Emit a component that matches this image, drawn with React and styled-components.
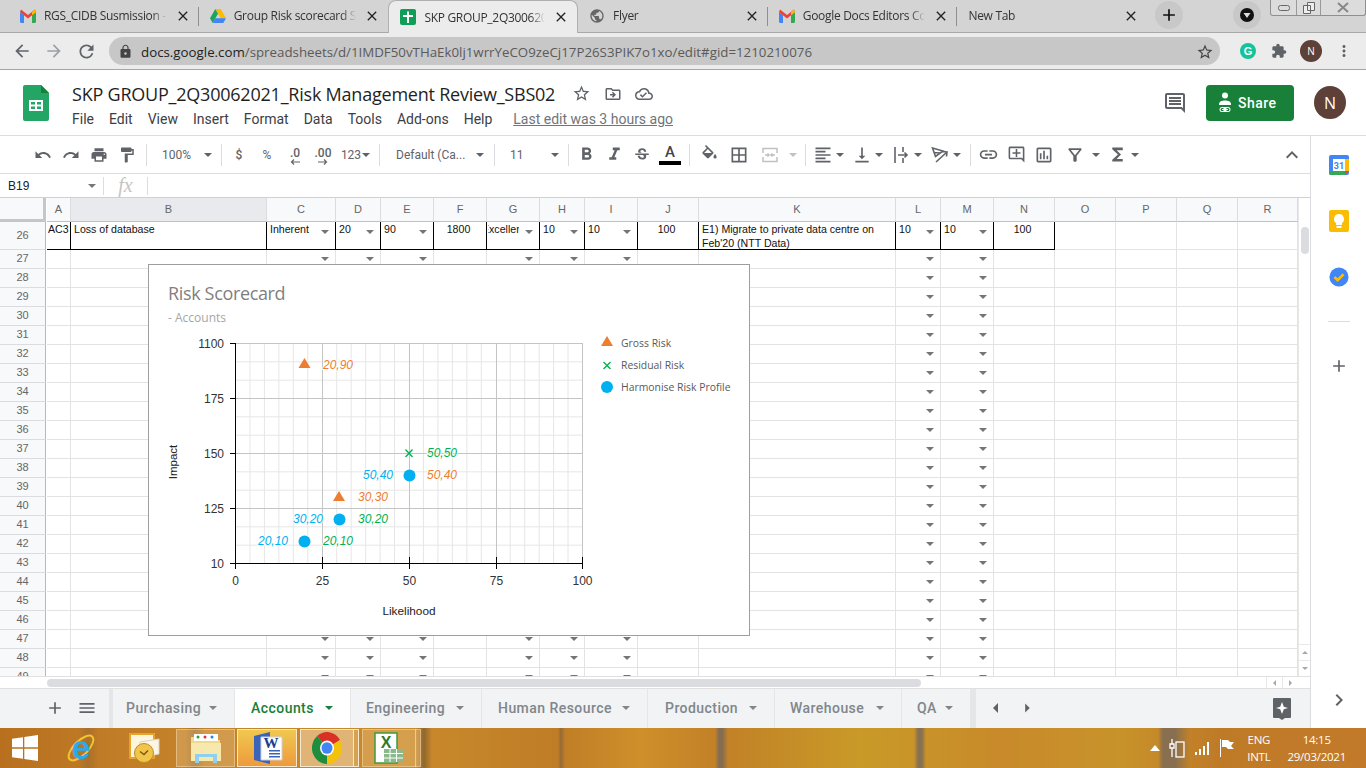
import React from "react";
import styled, { createGlobalStyle } from "styled-components";
import {
  MdArrowBack, MdArrowForward, MdRefresh, MdLock, MdStarBorder, MdExtension, MdMoreVert, MdAdd, MdClose,
  MdPublic, MdUndo, MdRedo, MdPrint, MdFormatPaint, MdFormatBold, MdFormatItalic, MdStrikethroughS,
  MdBorderAll, MdFormatAlignLeft, MdVerticalAlignBottom, MdLink, MdOutlineAddComment,
  MdOutlineInsertChart, MdOutlineFilterAlt, MdFunctions, MdExpandLess, MdChevronRight, MdMenu, MdOutlineDriveFileMove,
  MdOutlineCloudDone, MdOutlineInsertComment, MdArrowLeft, MdArrowRight,
} from "react-icons/md";

const GlobalStyle = createGlobalStyle`
  html, body { margin: 0; padding: 0; width: 1366px; height: 768px; overflow: hidden; background: #fff; }
  * { box-sizing: border-box; }
  body { font-family: "Roboto", "Liberation Sans", sans-serif; }
`;

const Page = styled.div`
  width: 1366px;
  height: 768px;
  display: flex;
  flex-direction: column;
  overflow: hidden;
`;

/* browser tabs */
const TabStrip = styled.div`
  height: 33px;
  flex: none;
  display: flex;
  align-items: flex-end;
  padding-left: 9px;
  background: #d4d4d4;
  border-bottom: 1px solid #a8a8a8;
`;
const BrowserTab = styled.div`
  width: 189.7px;
  height: 33px;
  margin-bottom: ${p => (p.$active ? "-1px" : "0")};
  display: flex;
  align-items: center;
  gap: 8px;
  padding: 0 8px 0 11px;
  border-radius: 8px 8px 0 0;
  background: ${p => (p.$active ? "#ececec" : "transparent")};
  border: ${p => (p.$active ? "1px solid #b0b0b0" : "none")};
  border-bottom: none;
  position: relative;
  &::after {
    content: "";
    display: ${p => (p.$sep ? "block" : "none")};
    position: absolute;
    right: 0;
    top: 8px;
    height: 19px;
    width: 1px;
    background: #8f8f8f;
  }
`;
const TabTitle = styled.span`
  flex: 1;
  min-width: 0;
  white-space: nowrap;
  overflow: hidden;
  font: 12px "Open Sans", "Noto Sans", sans-serif;
  letter-spacing: -0.3px;
  color: #333;
  -webkit-mask-image: linear-gradient(90deg, #000 88%, transparent 100%);
  mask-image: linear-gradient(90deg, #000 88%, transparent 100%);
`;
const Favicon = styled.span`
  width: 16px;
  height: 16px;
  flex: none;
  display: flex;
  align-items: center;
  justify-content: center;
  color: #666;
`;
const NewTabButton = styled.div`
  width: 28px;
  height: 28px;
  margin: 0 0 3px 8px;
  border-radius: 50%;
  background: #c8c8c8;
  display: flex;
  align-items: center;
  justify-content: center;
  color: #111;
`;
const ProfileDot = styled.div`
  width: 28px;
  height: 28px;
  margin: 0 0 3px 50px;
  border-radius: 50%;
  background: #c8c8c8;
  display: flex;
  align-items: center;
  justify-content: center;
`;
const WindowControls = styled.div`
  align-self: flex-start;
  display: flex;
  height: 16px;
  margin-left: auto;
  width: 96px;
  border: 1px solid #8f8f8f;
  border-top: none;
  border-radius: 0 0 3px 3px;
  background: #dcdcdc;
`;
const WinBtn = styled.div`
  width: ${p => p.$w}px;
  border-right: ${p => (p.$last ? "none" : "1px solid #9a9a9a")};
  display: flex;
  align-items: center;
  justify-content: center;
`;

/* address bar */
const AddressBar = styled.div`
  height: 37px;
  flex: none;
  display: flex;
  align-items: center;
  background: #ececec;
  border-bottom: 1px solid #a6a6a6;
  color: #5f6368;
  padding-left: 6px;
`;
const NavIcon = styled.span`
  width: ${p => p.$w || 32}px;
  margin-left: ${p => p.$ml || 0}px;
  display: flex;
  align-items: center;
  justify-content: center;
  color: ${p => p.$color || "#5f6368"};
  flex: none;
`;
const UrlPill = styled.div`
  width: 1111px;
  height: 28px;
  margin-left: 7px;
  border-radius: 14px;
  background: #c7c7c7;
  display: flex;
  align-items: center;
  padding: 1px 3px 0 9px;
  font: 13.3px "Open Sans", "Noto Sans", sans-serif;
  color: #5a5a5a;
  b { font-weight: 400; color: #222; }
`;
const GrammarlyBadge = styled.span`
  width: 16px;
  height: 16px;
  border-radius: 50%;
  background: #15c39a;
  color: #fff;
  font: 700 11px "Liberation Sans", sans-serif;
  display: flex;
  align-items: center;
  justify-content: center;
`;
const SmallAvatar = styled.span`
  width: 22px;
  height: 22px;
  border-radius: 50%;
  background: #5d4037;
  color: #fff;
  font: 10px "Open Sans", sans-serif;
  display: flex;
  align-items: center;
  justify-content: center;
`;

/* docs header */
const DocHeader = styled.div`
  height: 66px;
  flex: none;
  display: flex;
  align-items: center;
  padding: 0 20px 0 23px;
  background: #fff;
  border-bottom: 1px solid #dadce0;
`;
const DocTitleBlock = styled.div`
  margin-left: 23px;
  flex: 1;
  display: flex;
  flex-direction: column;
  gap: 4px;
  padding-top: 2px;
`;
const TitleRow = styled.div`
  display: flex;
  align-items: center;
  height: 26px;
  color: #5f6368;
`;
const DocTitle = styled.div`
  font: 18px "Open Sans", "Roboto", sans-serif;
  letter-spacing: -0.22px;
  color: #1f1f1f;
  margin-right: 11px;
`;
const HeadIcon = styled.span`
  width: 31px;
  display: flex;
  align-items: center;
  justify-content: center;
`;
const MenuRow = styled.div`
  display: flex;
  align-items: center;
  gap: 15px;
  font: 14px "Roboto", sans-serif;
  color: #3c4043;
`;
const LastEdit = styled.span`
  margin-left: 6px;
  color: #70757a;
  text-decoration: underline;
`;
const ShareButton = styled.div`
  width: 88px;
  height: 36px;
  margin-left: 19px;
  padding-left: 12px;
  background: #188038;
  border-radius: 4px;
  display: flex;
  align-items: center;
  gap: 6px;
  color: #fff;
  font: 500 14px "Roboto", sans-serif;
  letter-spacing: 0.5px;
`;
const Avatar = styled.div`
  width: 32px;
  height: 33px;
  margin-left: 20px;
  border-radius: 50%;
  background: #5d4037;
  color: #fff;
  font: 16px "Open Sans", sans-serif;
  display: flex;
  align-items: center;
  justify-content: center;
`;

/* body split */
const Workspace = styled.div`
  flex: 1;
  min-height: 0;
  display: flex;
`;
const SheetColumn = styled.div`
  width: 1311px;
  flex: none;
  display: flex;
  flex-direction: column;
  border-right: 1px solid #dadce0;
`;
const SidePanel = styled.div`
  flex: 1;
  display: flex;
  flex-direction: column;
  align-items: center;
  padding-top: 17px;
`;
const SideIcon = styled.div`
  height: 24px;
  margin-bottom: 32px;
  display: flex;
  align-items: center;
`;
const SideRule = styled.div`
  width: 22px;
  height: 1px;
  background: #dadce0;
  margin: 0 0 32px;
`;
const SideChevron = styled.div`
  margin-top: auto;
  height: 40px;
  margin-bottom: 8px;
  color: #5f6368;
  display: flex;
  align-items: center;
`;

/* toolbar */
const Toolbar = styled.div`
  height: 38px;
  flex: none;
  display: flex;
  align-items: center;
  padding-left: 29px;
  border-bottom: 1px solid #dadce0;
  color: #5f6368;
`;
const ToolBtn = styled.div`
  width: ${p => p.$w || 28}px;
  height: 28px;
  flex: none;
  margin-left: ${p => p.$ml || 0}px;
  display: flex;
  align-items: center;
  justify-content: center;
  font: ${p => p.$font || '12px "Roboto", sans-serif'};
  color: ${p => p.$color || "#5f6368"};
  opacity: ${p => (p.$disabled ? 0.4 : 1)};
`;
const ToolSelect = styled.div`
  width: ${p => p.$w}px;
  height: 28px;
  flex: none;
  display: flex;
  align-items: center;
  justify-content: space-between;
  padding: 0 ${p => p.$pr}px 0 ${p => p.$pl}px;
  font: 12px "Roboto", sans-serif;
  color: #5f6368;
`;
const ToolSep = styled.div`
  width: 1px;
  height: 22px;
  flex: none;
  margin: ${p => p.$m || "0 5px"};
  background: #dadce0;
`;
const Caret = styled.span`
  display: inline-block;
  flex: none;
  width: 0;
  height: 0;
  border-left: 4px solid transparent;
  border-right: 4px solid transparent;
  border-top: 4px solid ${p => p.$color || "#5f6368"};
  margin-left: ${p => p.$ml || 0}px;
`;
const DecimalStack = styled.span`
  display: flex;
  flex-direction: column;
  align-items: center;
  font: 500 12px/12px "Roboto", sans-serif;
  margin-top: 3px;
`;
const TextColorA = styled.span`
  display: flex;
  flex-direction: column;
  align-items: center;
  font: 500 15px "Roboto", sans-serif;
  line-height: 15px;
  color: #444;
  width: 22px;
  &::after {
    content: "";
    width: 22px;
    height: 4px;
    background: #000;
    margin-top: 1px;
  }
`;
const CollapseBtn = styled.div`
  margin-left: auto;
  margin-right: 6px;
  color: #5f6368;
  display: flex;
`;

/* formula bar */
const FormulaBar = styled.div`
  height: 24px;
  flex: none;
  display: flex;
  align-items: center;
  border-bottom: 1px solid #d0d0d0;
`;
const NameBox = styled.div`
  width: 103px;
  display: flex;
  align-items: center;
  justify-content: space-between;
  padding: 0 7px 0 8px;
  font: 12px "Liberation Sans", sans-serif;
  color: #222;
`;
const FxLabel = styled.div`
  width: 43px;
  text-align: center;
  font: italic 20px "Liberation Serif", serif;
  color: #c4c4c4;
`;
const BarSep = styled.div`
  width: 1px;
  height: 18px;
  background: #dadce0;
`;

/* sheet */
const SheetArea = styled.div`
  height: 478px;
  flex: none;
  display: flex;
  position: relative;
  overflow: hidden;
`;
const GridWrap = styled.div`
  width: 1298px;
  flex: none;
  overflow: hidden;
`;
const columns = "47px 24px 196px 69px 45px 53px 53px 53px 45px 53px 61px 197px 45px 53px 61px 61px 61px 61px 60px";
const GridRow = styled.div`
  display: grid;
  grid-template-columns: ${columns};
  height: ${p => p.$h}px;
`;
const CornerCell = styled.div`
  background: #f8f9fa;
  margin-right: 1px;
  border-right: 3px solid #c4c7c5;
  border-bottom: 3px solid #c4c7c5;
`;
const ColHead = styled.div`
  background: ${p => (p.$selected ? "#e8eaed" : "#f8f9fa")};
  border-right: 1px solid #dadce0;
  border-bottom: 1px solid #c0c0c0;
  padding-bottom: 1px;
  display: flex;
  align-items: center;
  justify-content: center;
  font: 11px "Liberation Sans", sans-serif;
  color: #666;
`;
const RowHead = styled.div`
  background: #f8f9fa;
  margin-right: 1px;
  border-right: 1px solid #b8b8b8;
  border-bottom: 1px solid #dadce0;
  padding-bottom: 2px;
  display: flex;
  align-items: center;
  justify-content: center;
  font: 11px "Liberation Sans", sans-serif;
  color: #666;
`;
const Cell = styled.div`
  border-right: 1px solid #e2e3e3;
  border-bottom: 1px solid #e2e3e3;
  display: flex;
  align-items: center;
  justify-content: flex-end;
  padding: 0 6px 1px 0;
`;
const DataCell = styled.div`
  border-right: 1px solid #000;
  border-bottom: 1px solid #000;
  display: flex;
  align-items: flex-start;
  justify-content: ${p => (p.$center ? "center" : "space-between")};
  padding: 0 ${p => (p.$tight ? 0 : 6)}px 0 ${p => (p.$tight ? 1 : 3)}px;
  font: 10.6px/14px "Liberation Sans", sans-serif;
  color: #111;
  overflow: hidden;
  white-space: ${p => (p.$wrap ? "normal" : "nowrap")};
`;
const DataCaret = styled(Caret)`
  margin-top: 8px;
`;
const ClippedCaret = styled(DataCaret)`
  margin-right: 6px;
`;
const ClipText = styled.span`
  flex: 1;
  min-width: 0;
  margin-right: 6px;
  overflow: hidden;
  display: flex;
  justify-content: center;
`;
const VScroll = styled.div`
  flex: 1;
  display: flex;
  flex-direction: column;
  align-items: center;
  padding-top: 29px;
  background: #fff;
  border-left: 1px solid #e8e8e8;
`;
const VThumb = styled.div`
  width: 8px;
  height: 27px;
  border-radius: 4px;
  background: #dadce0;
`;
const ScrollArrow = styled.div`
  width: 100%;
  height: 16px;
  margin-top: ${p => (p.$push ? "auto" : 0)};
  border-top: 1px solid #e8e8e8;
  display: flex;
  align-items: center;
  justify-content: center;
`;
const TinyUp = styled.span`
  width: 0;
  height: 0;
  border-left: 3px solid transparent;
  border-right: 3px solid transparent;
  border-bottom: 3px solid #a8a8a8;
`;
const TinyDown = styled(TinyUp)`
  border-bottom: none;
  border-top: 3px solid #a8a8a8;
`;

/* chart */
const ChartCard = styled.div`
  position: absolute;
  left: 148px;
  top: 66px;
  width: 602px;
  height: 372px;
  background: #fff;
  border: 1px solid #9e9e9e;
  padding: 16px 0 0 0;
`;
const ChartTitle = styled.div`
  margin-left: 19px;
  font: 18px/24px "Open Sans", "Noto Sans", sans-serif;
  letter-spacing: -0.35px;
  color: #7f7f7f;
`;
const ChartSub = styled.div`
  margin: 5px 0 0 19px;
  font: 12px/16px "Open Sans", "Noto Sans", sans-serif;
  color: #a6a6a6;
`;
const ChartSvg = styled.svg`
  display: block;
  position: absolute;
  left: 0;
  top: 0;
`;

/* horizontal scroll */
const HScrollRow = styled.div`
  height: 12px;
  flex: none;
  display: flex;
  align-items: center;
  border-top: 1px solid #e0e0e0;
  padding-left: 47px;
  background: #fff;
`;
const HThumb = styled.div`
  width: 874px;
  height: 8px;
  border-radius: 4px;
  background: #dadce0;
`;
const HArrows = styled.div`
  margin-left: auto;
  margin-right: 12px;
  height: 100%;
  display: flex;
`;
const HArrow = styled.div`
  width: 16px;
  display: flex;
  align-items: center;
  justify-content: center;
  border-left: 1px solid #e8e8e8;
  span { width: 0; height: 0; border-top: 3px solid transparent; border-bottom: 3px solid transparent; }
`;
const ArrowL = styled.span`border-right: 3px solid #a8a8a8;`;
const ArrowR = styled.span`border-left: 3px solid #a8a8a8;`;

/* sheet tabs */
const SheetTabs = styled.div`
  height: 40px;
  flex: none;
  display: flex;
  align-items: stretch;
  background: #f1f3f4;
  border-top: 1px solid #e0e0e0;
  padding-left: 41px;
`;
const TabsIcon = styled.div`
  width: ${p => p.$w || 31}px;
  padding-bottom: 2px;
  display: flex;
  align-items: center;
  justify-content: center;
  color: #5f6368;
  flex: none;
`;
const ThickSep = styled.div`
  width: ${p => p.$w || 4}px;
  flex: none;
  background: #e4e6e8;
  margin-left: ${p => p.$ml || 0}px;
`;
const SheetTab = styled.div`
  width: ${p => p.$w}px;
  flex: none;
  display: flex;
  align-items: center;
  justify-content: space-between;
  padding: 0 17px 2px ${p => p.$pl || 15}px;
  background: ${p => (p.$active ? "#fff" : "transparent")};
  border-right: 1px solid #e4e6e8;
  font: 500 14px "Roboto", sans-serif;
  letter-spacing: 0.45px;
  color: ${p => (p.$active ? "#188038" : "#80868b")};
`;
const ExploreBtn = styled.div`
  margin-left: auto;
  margin-right: 18px;
  display: flex;
  align-items: center;
`;

/* taskbar */
const Taskbar = styled.div`
  height: 40px;
  flex: none;
  display: flex;
  align-items: center;
  padding-left: 12px;
  color: #fff;
  background:
    linear-gradient(90deg,
      transparent 0 78px, rgba(120,90,60,.3) 88px, transparent 98px,
      transparent 185px, rgba(110,85,60,.35) 195px, transparent 205px,
      transparent 416px, rgba(90,70,50,.5) 424px, transparent 432px,
      transparent 558px, rgba(110,90,70,.55) 561px, transparent 565px,
      transparent 715px, rgba(120,105,90,.85) 719px, rgba(120,105,90,.85) 722px, transparent 728px,
      transparent 914px, rgba(120,105,90,.8) 918px, rgba(120,105,90,.8) 922px, transparent 926px,
      transparent 1158px, rgba(120,105,90,.8) 1163px, rgba(120,105,90,.8) 1175px, transparent 1190px),
    linear-gradient(90deg, #b8701f 0, #c27f28 140px, #c98a2b 400px, #bf7d26 560px, #cf8f2a 640px, #c18027 720px, #c99a28 860px, #c88a2a 1000px, #c8932a 1120px, #bf7a28 1220px, #c27a2a 1366px);
`;
const StartIcon = styled.div`
  width: 26px;
  height: 26px;
  margin-right: 13px;
`;
const PinIcon = styled.div`
  width: ${p => p.$w}px;
  flex: none;
  display: flex;
  justify-content: center;
`;
const TaskBtn = styled.div`
  width: ${p => p.$w || 59}px;
  height: 38px;
  flex: none;
  margin-left: ${p => p.$ml || 0}px;
  position: relative;
  display: flex;
  align-items: center;
  justify-content: center;
  border: 1px solid ${p => (p.$open ? "#f4e9d0" : "rgba(255,240,210,.4)")};
  background: ${p => p.$bg || "rgba(255,235,200,.22)"};
  &::after {
    content: "";
    display: ${p => (p.$stack ? "block" : "none")};
    position: absolute;
    top: -1px;
    bottom: -1px;
    right: -6px;
    width: 5px;
    border: 1px solid ${p => (p.$open ? "#f4e9d0" : "rgba(255,240,210,.4)")};
    border-left: none;
    background: rgba(255,235,200,.25);
  }
`;
const Tray = styled.div`
  margin-left: auto;
  display: flex;
  align-items: center;
  gap: 9px;
  padding-right: 20px;
`;
const TrayText = styled.div`
  display: flex;
  flex-direction: column;
  align-items: center;
  font: 11.5px/17px "Open Sans", "Noto Sans", sans-serif;
  letter-spacing: -0.25px;
  margin-left: ${p => p.$ml || 0}px;
`;

const SheetsMark = () => (
  <svg width="26" height="36" viewBox="0 0 26 36">
    <path d="M2 0h16l8 8v26a2 2 0 0 1-2 2H2a2 2 0 0 1-2-2V2a2 2 0 0 1 2-2z" fill="#23a566" />
    <path d="M18 0l8 8h-8z" fill="#188038" />
    <path d="M6 15h14v11H6zm2 2v2.500h4V17zm6 0v2.500h4V17zm-6 4.500V24h4v-2.500zm6 0V24h4v-2.500z" fill="#fff" fillRule="evenodd" />
  </svg>
);
const GmailIcon = () => (
  <svg width="16" height="14" viewBox="0 0 16 14">
    <path d="M0 3v9.500A1.500 1.500 0 0 0 1.500 14H4V6z" fill="#4285f4" />
    <path d="M12 6v8h2.500a1.500 1.500 0 0 0 1.500-1.500V3z" fill="#34a853" />
    <path d="M0 3l1-2.500L8 6l7-5.500L16 3l-8 6.500L0 3z" fill="#ea4335" />
    <path d="M12 3.200L15 .5 16 3l-4 3.200z" fill="#fbbc04" />
  </svg>
);
const DriveIcon = () => (
  <svg width="16" height="14" viewBox="0 0 16 14">
    <path d="M5.300 0h5.400l5.300 9.300h-5.400z" fill="#fbbc04" />
    <path d="M5.300 0L0 9.300 2.700 14l5.300-9.300z" fill="#1ea362" />
    <path d="M2.700 14h10.600L16 9.300H5.400z" fill="#4285f4" />
  </svg>
);
const SheetsFavicon = () => (
  <svg width="16" height="16" viewBox="0 0 16 16">
    <rect width="16" height="16" rx="2" fill="#0f9d58" />
    <path d="M7 2.500h2V6h4v2H9v6H7V8H3V6h4z" fill="#fff" />
  </svg>
);
const ShareIcon = () => (
  <svg width="14" height="22" viewBox="0 0 14 22" fill="#fff">
    <circle cx="7" cy="3.500" r="3" />
    <path d="M1 12c0-2.500 3-3.500 6-3.500s6 1 6 3.500v1H1z" />
    <path d="M4 15h6a2 2 0 0 1 0 5H4a2 2 0 0 1 0-5zm0 1a1.500 1.500 0 0 0 0 3h1.500v-3zm4.500 0v3H10a1.500 1.500 0 0 0 0-3z" fillRule="evenodd" />
    <rect x="4" y="17" width="6" height="1" />
  </svg>
);
const FillIcon = () => (
  <svg width="19" height="19" viewBox="0 0 24 24" fill="currentColor">
    <path d="M16.560 8.940 7.620 0 6.210 1.410l2.380 2.380-5.150 5.150a1.500 1.500 0 0 0 0 2.120l5.500 5.500a1.500 1.500 0 0 0 2.120 0l5.500-5.500a1.500 1.500 0 0 0 0-2.120zM5.210 10 10 5.210 14.790 10z" />
    <path d="M19 11.500s-2 2.170-2 3.500a2 2 0 0 0 4 0c0-1.330-2-3.500-2-3.500z" />
  </svg>
);
const MergeIcon = () => (
  <svg width="18" height="18" viewBox="0 0 18 18" fill="none" stroke="currentColor" strokeWidth="1.500">
    <path d="M2 7V2.500h14V7M2 11v4.500h14V11M4 9h4M6.500 7.500 8 9l-1.500 1.500M14 9h-4M11.500 7.500 10 9l1.500 1.500" />
  </svg>
);
const WrapIcon = () => (
  <svg width="18" height="18" viewBox="0 0 18 18" fill="none" stroke="currentColor" strokeWidth="1.600">
    <path d="M3 1v16M11 1v5M11 12v5M6 9h9M12.500 6.500 15 9l-2.500 2.500" />
  </svg>
);
const RotateIcon = () => (
  <svg width="18" height="18" viewBox="0 0 18 18" fill="none" stroke="currentColor" strokeWidth="1.600">
    <path d="M1.500 2 12 5 4.500 10.500zM3.500 6.500 9 7M5 16 16 6M11.500 5.500 16 6l-.5 4.500" />
  </svg>
);
const ExploreIcon = () => (
  <svg width="20" height="24" viewBox="0 0 20 24">
    <path d="M2 1h16a1 1 0 0 1 1 1v18a1 1 0 0 1-1 1h-5l-3 2-3-2H2a1 1 0 0 1-1-1V2a1 1 0 0 1 1-1z" fill="#5f6368" />
    <path d="M10 5l1.800 4.700L16 11l-4.200 1.300L10 17l-1.800-4.700L4 11l4.200-1.300z" fill="#fff" />
  </svg>
);
const CalendarIcon = () => (
  <svg width="20" height="20" viewBox="0 0 20 20">
    <rect width="20" height="20" rx="2" fill="#4285f4" />
    <rect x="4" y="4" width="12" height="12" fill="#fff" />
    <path d="M16 4h4v12h-4z" fill="#fbbc04" />
    <path d="M0 16h16v4H2a2 2 0 0 1-2-2z" fill="#34a853" />
    <path d="M16 16h4l-4 4z" fill="#ea4335" />
    <text x="10" y="13.500" textAnchor="middle" fontSize="9" fontWeight="700" fontFamily="Roboto" fill="#4285f4">31</text>
  </svg>
);
const KeepIcon = () => (
  <svg width="20" height="22" viewBox="0 0 20 22">
    <rect width="20" height="22" rx="2" fill="#fbbc04" />
    <path d="M10 4a5 5 0 0 1 3 9v2H7v-2a5 5 0 0 1 3-9zM7.500 16h5v2h-5z" fill="#fff" />
  </svg>
);
const TasksIcon = () => (
  <svg width="20" height="20" viewBox="0 0 22 22">
    <circle cx="11" cy="11" r="10.500" fill="#4285f4" />
    <path d="M6 11l3.500 3.500L16 8" stroke="#fbbc04" strokeWidth="3" fill="none" />
  </svg>
);
const WindowsLogo = () => (
  <svg width="26" height="26" viewBox="0 0 26 26" fill="#fff">
    <path d="M0 3.700l11-1.500V12.300H0zM12.300 2 26 0v12.300H12.300zM0 13.700h11v10.100L0 22.300zM12.300 13.700H26V26l-13.700-2z" />
  </svg>
);
const IEIcon = () => (
  <svg width="32" height="34" viewBox="0 0 32 34">
    <ellipse cx="16" cy="17" rx="16" ry="7" fill="none" stroke="#f3c432" strokeWidth="2" transform="rotate(-45 16 17)" />
    <text x="16" y="28" textAnchor="middle" fontSize="34" fontWeight="700" fontFamily="Liberation Sans" fill="#2fa9e6">e</text>
  </svg>
);
const OutlookIcon = () => (
  <svg width="32" height="32" viewBox="0 0 32 32">
    <path d="M2 2h24v24H2z" fill="#fff4dc" stroke="#e8a42a" strokeWidth="2" />
    <path d="M12 10 31 7v15l-19 4z" fill="#fdf6e6" stroke="#d9d2c0" />
    <circle cx="16" cy="21" r="9.500" fill="#f2c44a" stroke="#b98f1e" />
    <path d="M12 19.500l4 3 4-4" stroke="#7a5a10" strokeWidth="1.500" fill="none" />
  </svg>
);
const FolderIcon = () => (
  <svg width="32" height="32" viewBox="0 0 32 32">
    <path d="M1 5h10l3 3h16v21H1z" fill="#f0d98a" />
    <rect x="4" y="2" width="24" height="7" fill="#fff" />
    <circle cx="8" cy="5" r="1.500" fill="#2ca02c" /><circle cx="15" cy="5" r="1.500" fill="#d33" /><circle cx="22" cy="5" r="1.500" fill="#28d" />
    <path d="M1 11h30v18H1z" fill="#f7e8ad" />
    <path d="M5 22h22v9h-4v-6H9v6H5z" fill="#8fd0ee" />
  </svg>
);
const WordIcon = () => (
  <svg width="32" height="34" viewBox="0 0 32 34">
    <path d="M3 5 19 1v32L3 29z" fill="#3a64b8" />
    <path d="M10 6h21v23H10z" fill="#fff" stroke="#c8d0e4" />
    <path d="M18 19h11v1.500H18zM18 22h11v1.500H18zM18 25h11v1.500H18z" fill="#3a64b8" />
    <text x="20" y="17" textAnchor="middle" fontSize="15" fontWeight="700" fontFamily="Liberation Serif" fill="#1c3e8c">W</text>
  </svg>
);
const ChromeIcon = () => (
  <svg width="30" height="32" viewBox="0 0 30 30" preserveAspectRatio="none">
    <path d="M15 15 5 3.800A15 15 0 0 1 28 7.500z" fill="#d93025" />
    <path d="M15 15 28 7.500A15 15 0 0 1 15 30z" fill="#f4c20d" />
    <path d="M15 15V30A15 15 0 0 1 5 3.800z" fill="#1e8e3e" />
    <circle cx="15" cy="15" r="7" fill="#fff" />
    <circle cx="15" cy="15" r="5.500" fill="#4285f4" />
  </svg>
);
const ExcelIcon = () => (
  <svg width="32" height="34" viewBox="0 0 32 34">
    <path d="M2 2h22v30H2z" fill="#fff" stroke="#3f9b3f" strokeWidth="1.500" />
    <path d="M11 18h19v13H11z" fill="#8cb98c" />
    <path d="M11 22.500h19M11 27h19M17 18v13M23.500 18v13" stroke="#fff" />
    <text x="13" y="17" textAnchor="middle" fontSize="16" fontWeight="700" fontFamily="Liberation Sans" fill="#2d7a2d">X</text>
  </svg>
);

const browserTabs = [
  { title: "RGS_CIDB Susmission - ", icon: <GmailIcon />, sep: true },
  { title: "Group Risk scorecard Sp", icon: <DriveIcon /> },
  { title: "SKP GROUP_2Q30062021", icon: <SheetsFavicon />, active: true },
  { title: "Flyer", icon: <MdPublic size={16} />, sep: true },
  { title: "Google Docs Editors Co", icon: <GmailIcon />, sep: true },
  { title: "New Tab" },
];
const menus = ["File", "Edit", "View", "Insert", "Format", "Data", "Tools", "Add-ons", "Help"];
const colLetters = ["A", "B", "C", "D", "E", "F", "G", "H", "I", "J", "K", "L", "M", "N", "O", "P", "Q", "R"];
const caretCols = ["C", "D", "E", "G", "H", "I", "L", "M"];
const emptyRows = Array.from({ length: 23 }, (_, i) => 27 + i);
const sheetTabs = [
  { name: "Purchasing", w: 122, pl: 13 },
  { name: "Accounts", w: 116, active: true, pl: 16 },
  { name: "Engineering", w: 131 },
  { name: "Human Resource", w: 166, pl: 16 },
  { name: "Production", w: 127, pl: 17 },
  { name: "Warehouse", w: 127 },
  { name: "QA", w: 69 },
];

const majorX = [235.5, 322.5, 409.5, 496.5, 582.5];
const majorY = [343.5, 398.5, 453.5, 508.5, 563.5];
const xLabels = ["0", "25", "50", "75", "100"];
const yLabels = ["1100", "175", "150", "125", "10"];
const minorX = Array.from({ length: 24 }, (_, i) => 235.5 + (i * 347) / 24).filter((_, i) => i % 6 !== 0);
const minorY = Array.from({ length: 12 }, (_, i) => 343.5 + (i * 220) / 12).filter((_, i) => i % 3 !== 0);
const ORANGE = "#ed7d31";
const GREEN = "#00b050";
const BLUE = "#00b0f0";
const pointLabels = [
  { x: 323, y: 369, t: "20,90", c: ORANGE },
  { x: 427, y: 457, t: "50,50", c: GREEN },
  { x: 427, y: 479, t: "50,40", c: ORANGE },
  { x: 363, y: 479, t: "50,40", c: BLUE },
  { x: 358, y: 501, t: "30,30", c: ORANGE },
  { x: 358, y: 523, t: "30,20", c: GREEN },
  { x: 293, y: 523, t: "30,20", c: BLUE },
  { x: 323, y: 545, t: "20,10", c: GREEN },
  { x: 258, y: 545, t: "20,10", c: BLUE },
];
const Triangle = ({ x, y }) => <path d={`M${x} ${y - 6}l6 10h-12z`} fill={ORANGE} />;

const Chart = () => (
  <ChartCard>
    <ChartTitle>Risk Scorecard</ChartTitle>
    <ChartSub>- Accounts</ChartSub>
    <ChartSvg width="600" height="370" viewBox="149 265 600 370">
      {minorX.map(x => <line key={x} x1={x} x2={x} y1="343" y2="563" stroke="#e6e6e6" />)}
      {minorY.map(y => <line key={y} x1="235" x2="583" y1={y} y2={y} stroke="#e6e6e6" />)}
      {majorX.slice(1).map(x => <line key={x} x1={x} x2={x} y1="343" y2="563" stroke="#c4c4c4" />)}
      {majorY.slice(0, 4).map(y => <line key={y} x1="235" x2="583" y1={y} y2={y} stroke="#c4c4c4" />)}
      <line x1="235.500" x2="235.500" y1="343" y2="569" stroke="#000" />
      <line x1="235" x2="583" y1="563.500" y2="563.500" stroke="#000" />
      {majorY.map(y => <line key={y} x1="230" x2="235" y1={y} y2={y} stroke="#000" />)}
      {majorX.slice(1).map(x => <line key={x} x1={x} x2={x} y1="557" y2="569" stroke="#000" />)}
      <g fontFamily="Liberation Sans" fontSize="12" fill="#333">
        {yLabels.map((l, i) => <text key={l} x="224" y={majorY[i] + 4} textAnchor="end">{l}</text>)}
        {xLabels.map((l, i) => <text key={l} x={majorX[i]} y="585" textAnchor="middle">{l}</text>)}
        <text x="409" y="615" textAnchor="middle" fontSize="11.800" fill="#222">Likelihood</text>
        <text transform="translate(177 462) rotate(-90)" textAnchor="middle" fontSize="11.500" fill="#222">Impact</text>
      </g>
      <Triangle x={304.500} y={364} />
      <Triangle x={339} y={497} />
      <path d="M405.500 449.500l7 7.500M412.500 449.500l-7 7.500" stroke={GREEN} strokeWidth="1.300" />
      <circle cx="409.500" cy="475.500" r="6" fill={BLUE} />
      <circle cx="339.500" cy="519.500" r="6" fill={BLUE} />
      <circle cx="304.500" cy="541.500" r="6" fill={BLUE} />
      <g fontFamily="Liberation Sans" fontStyle="italic" fontSize="12" stroke="#fff" strokeOpacity="0.8" strokeWidth="2" paintOrder="stroke">
        {pointLabels.map(p => <text key={p.t + p.c} x={p.x} y={p.y} fill={p.c}>{p.t}</text>)}
      </g>
      <Triangle x={607} y={342} />
      <path d="M603.500 362l7 7M610.500 362l-7 7" stroke={GREEN} strokeWidth="1.300" />
      <circle cx="607" cy="387" r="6" fill={BLUE} />
      <g fontFamily="Open Sans" fontSize="10.400" fill="#595959">
        <text x="621" y="347">Gross Risk</text>
        <text x="621" y="369">Residual Risk</text>
        <text x="621" y="391">Harmonise Risk Profile</text>
      </g>
    </ChartSvg>
  </ChartCard>
);

const DataRow = () => (
  <GridRow $h={28}>
    <RowHead>26</RowHead>
    <DataCell $tight>AC3</DataCell>
    <DataCell>Loss of database</DataCell>
    <DataCell>Inherent<DataCaret $color="#757575" /></DataCell>
    <DataCell>20<DataCaret $color="#757575" /></DataCell>
    <DataCell>90<DataCaret $color="#757575" /></DataCell>
    <DataCell $center>1800</DataCell>
    <DataCell $tight><ClipText>Excellent</ClipText><ClippedCaret $color="#757575" /></DataCell>
    <DataCell>10<DataCaret $color="#757575" /></DataCell>
    <DataCell>10<DataCaret $color="#757575" /></DataCell>
    <DataCell $center>100</DataCell>
    <DataCell $wrap>E1) Migrate to private data centre on Feb'20 (NTT Data)</DataCell>
    <DataCell>10<DataCaret $color="#757575" /></DataCell>
    <DataCell>10<DataCaret $color="#757575" /></DataCell>
    <DataCell $center>100</DataCell>
    <Cell /><Cell /><Cell /><Cell />
  </GridRow>
);

export default function App() {
  return (
    <Page>
      <GlobalStyle />
      <TabStrip>
        {browserTabs.map(t => (
          <BrowserTab key={t.title} $active={t.active} $sep={t.sep}>
            {t.icon && <Favicon>{t.icon}</Favicon>}
            <TabTitle>{t.title}</TabTitle>
            <MdClose size={16} color="#222" />
          </BrowserTab>
        ))}
        <NewTabButton><MdAdd size={20} /></NewTabButton>
        <ProfileDot>
          <svg width="14" height="14" viewBox="0 0 14 14">
            <circle cx="7" cy="7" r="7" fill="#111" />
            <path d="M3.500 5h7L7 10z" fill="#ddd" />
          </svg>
        </ProfileDot>
        <WindowControls>
          <WinBtn $w={26}><svg width="12" height="6"><rect x=".5" y=".5" width="11" height="5" rx="2" fill="none" stroke="#666" /></svg></WinBtn>
          <WinBtn $w={24}><svg width="12" height="12"><path d="M4.500.5h7v8h-7zM.5 3.500h7v8h-7z" fill="#eee" stroke="#666" /></svg></WinBtn>
          <WinBtn $w={44} $last><svg width="12" height="11"><path d="M1 1l10 9M11 1 1 10" stroke="#888" strokeWidth="2" /></svg></WinBtn>
        </WindowControls>
      </TabStrip>

      <AddressBar>
        <NavIcon><MdArrowBack size={20} /></NavIcon>
        <NavIcon $color="#9aa0a6"><MdArrowForward size={20} /></NavIcon>
        <NavIcon><MdRefresh size={21} /></NavIcon>
        <UrlPill>
          <MdLock size={15} style={{ marginRight: 8, color: "#444" }} />
          <span><b>docs.google.com</b>/spreadsheets/d/1IMDF50vTHaEk0lj1wrrYeCO9zeCj17P26S3PIK7o1xo/edit#gid=1210210076</span>
          <MdStarBorder size={18} style={{ marginLeft: "auto", marginRight: 3, color: "#444" }} />
        </UrlPill>
        <NavIcon $w={46} $ml={5}><GrammarlyBadge>G</GrammarlyBadge></NavIcon>
        <NavIcon $w={16}><MdExtension size={18} /></NavIcon>
        <NavIcon $w={48}><SmallAvatar>N</SmallAvatar></NavIcon>
        <NavIcon $w={18}><MdMoreVert size={18} /></NavIcon>
      </AddressBar>

      <DocHeader>
        <SheetsMark />
        <DocTitleBlock>
          <TitleRow>
            <DocTitle>SKP GROUP_2Q30062021_Risk Management Review_SBS02</DocTitle>
            <HeadIcon><MdStarBorder size={19} /></HeadIcon>
            <HeadIcon><MdOutlineDriveFileMove size={18} /></HeadIcon>
            <HeadIcon><MdOutlineCloudDone size={18} /></HeadIcon>
          </TitleRow>
          <MenuRow>
            {menus.map(m => <span key={m}>{m}</span>)}
            <LastEdit>Last edit was 3 hours ago</LastEdit>
          </MenuRow>
        </DocTitleBlock>
        <MdOutlineInsertComment size={24} color="#5f6368" />
        <ShareButton><ShareIcon />Share</ShareButton>
        <Avatar>N</Avatar>
      </DocHeader>

      <Workspace>
        <SheetColumn>
          <Toolbar>
            <ToolBtn><MdUndo size={18} /></ToolBtn>
            <ToolBtn><MdRedo size={18} /></ToolBtn>
            <ToolBtn><MdPrint size={18} /></ToolBtn>
            <ToolBtn><MdFormatPaint size={18} /></ToolBtn>
            <ToolSep />
            <ToolSelect $w={69} $pl={10} $pr={9}>100%<Caret /></ToolSelect>
            <ToolSep $m="0 3px 0 0" />
            <ToolBtn $font='500 12px "Roboto", sans-serif'>$</ToolBtn>
            <ToolBtn>%</ToolBtn>
            <ToolBtn>
              <DecimalStack>.0<svg width="10" height="6" viewBox="0 0 10 6"><path d="M10 3H2M4 .5 1.500 3 4 5.500" stroke="currentColor" strokeWidth="1.200" fill="none" /></svg></DecimalStack>
            </ToolBtn>
            <ToolBtn>
              <DecimalStack>.00<svg width="10" height="6" viewBox="0 0 10 6"><path d="M0 3h8M6 .5 8.500 3 6 5.500" stroke="currentColor" strokeWidth="1.200" fill="none" /></svg></DecimalStack>
            </ToolBtn>
            <ToolBtn $w={37}>123<Caret $ml={1} /></ToolBtn>
            <ToolSep />
            <ToolSelect $w={109} $pl={11} $pr={10}>Default (Ca...<Caret /></ToolSelect>
            <ToolSep $m="0" />
            <ToolSelect $w={73} $pl={15} $pr={9}>11<Caret /></ToolSelect>
            <ToolSep $m="0 3px 0 0" />
            <ToolBtn><MdFormatBold size={21} /></ToolBtn>
            <ToolBtn><MdFormatItalic size={21} /></ToolBtn>
            <ToolBtn><MdStrikethroughS size={18} /></ToolBtn>
            <ToolBtn><TextColorA>A</TextColorA></ToolBtn>
            <ToolSep />
            <ToolBtn><FillIcon /></ToolBtn>
            <ToolBtn $w={32}><MdBorderAll size={20} /></ToolBtn>
            <ToolBtn $w={30} $disabled><MergeIcon /></ToolBtn>
            <ToolBtn $w={15} $disabled><Caret /></ToolBtn>
            <ToolSep />
            <ToolBtn $w={24}><MdFormatAlignLeft size={20} /></ToolBtn>
            <ToolBtn $w={10}><Caret /></ToolBtn>
            <ToolBtn $w={24} $ml={5}><MdVerticalAlignBottom size={20} /></ToolBtn>
            <ToolBtn $w={10}><Caret /></ToolBtn>
            <ToolBtn $w={24} $ml={5}><WrapIcon /></ToolBtn>
            <ToolBtn $w={10}><Caret /></ToolBtn>
            <ToolBtn $w={24} $ml={5}><RotateIcon /></ToolBtn>
            <ToolBtn $w={10}><Caret /></ToolBtn>
            <ToolSep $m="0 3px 0 8px" />
            <ToolBtn><MdLink size={21} /></ToolBtn>
            <ToolBtn><MdOutlineAddComment size={19} /></ToolBtn>
            <ToolBtn><MdOutlineInsertChart size={20} /></ToolBtn>
            <ToolBtn $ml={3}><MdOutlineFilterAlt size={20} /></ToolBtn>
            <ToolBtn $w={14}><Caret /></ToolBtn>
            <ToolBtn><MdFunctions size={21} /></ToolBtn>
            <ToolBtn $w={8}><Caret /></ToolBtn>
            <CollapseBtn><MdExpandLess size={24} /></CollapseBtn>
          </Toolbar>

          <FormulaBar>
            <NameBox>B19<Caret $color="#777" /></NameBox>
            <BarSep />
            <FxLabel>fx</FxLabel>
            <BarSep />
          </FormulaBar>

          <SheetArea>
            <GridWrap>
              <GridRow $h={24}>
                <CornerCell />
                {colLetters.map(c => <ColHead key={c} $selected={c === "B"}>{c}</ColHead>)}
              </GridRow>
              <DataRow />
              {emptyRows.map(n => (
                <GridRow key={n} $h={19}>
                  <RowHead>{n}</RowHead>
                  {colLetters.map(c => <Cell key={c}>{caretCols.includes(c) && <Caret $color="#757575" />}</Cell>)}
                </GridRow>
              ))}
            </GridWrap>
            <VScroll>
              <VThumb />
              <ScrollArrow $push><TinyUp /></ScrollArrow>
              <ScrollArrow><TinyDown /></ScrollArrow>
            </VScroll>
            <Chart />
          </SheetArea>

          <HScrollRow>
            <HThumb />
            <HArrows>
              <HArrow><ArrowL /></HArrow>
              <HArrow><ArrowR /></HArrow>
            </HArrows>
          </HScrollRow>

          <SheetTabs>
            <TabsIcon $w={28}><MdAdd size={20} /></TabsIcon>
            <TabsIcon $w={35}><MdMenu size={20} /></TabsIcon>
            <ThickSep $ml={5} />
            {sheetTabs.map(t => (
              <SheetTab key={t.name} $w={t.w} $active={t.active} $pl={t.pl}>
                {t.name}<Caret $color={t.active ? "#188038" : "#80868b"} />
              </SheetTab>
            ))}
            <ThickSep $w={5} />
            <TabsIcon $w={40}><MdArrowLeft size={24} /></TabsIcon>
            <TabsIcon $w={22}><MdArrowRight size={24} /></TabsIcon>
            <ExploreBtn><ExploreIcon /></ExploreBtn>
          </SheetTabs>
        </SheetColumn>

        <SidePanel>
          <SideIcon><CalendarIcon /></SideIcon>
          <SideIcon><KeepIcon /></SideIcon>
          <SideIcon><TasksIcon /></SideIcon>
          <SideRule />
          <SideIcon><MdAdd size={20} color="#5f6368" /></SideIcon>
          <SideChevron><MdChevronRight size={24} /></SideChevron>
        </SidePanel>
      </Workspace>

      <Taskbar>
        <StartIcon><WindowsLogo /></StartIcon>
        <PinIcon $w={60}><IEIcon /></PinIcon>
        <PinIcon $w={65}><OutlookIcon /></PinIcon>
        <TaskBtn><FolderIcon /></TaskBtn>
        <TaskBtn $ml={2} $open $w={60} $bg="linear-gradient(#f0c850, #ef9a3c)"><WordIcon /></TaskBtn>
        <TaskBtn $ml={3} $w={54} $open $stack $bg="rgba(255,235,210,.45)"><ChromeIcon /></TaskBtn>
        <TaskBtn $ml={8} $w={54} $stack><ExcelIcon /></TaskBtn>
        <Tray>
          <svg width="10" height="6"><path d="M0 6l5-6 5 6z" fill="#fff" /></svg>
          <svg width="16" height="20" viewBox="0 0 16 20" fill="none" stroke="#fff" strokeWidth="1.300"><rect x="7" y="4" width="8" height="15" /><path d="M3 1v5M1 6h4v4H1zM3 10v9" /></svg>
          <svg width="16" height="14" viewBox="0 0 16 14" fill="#fff"><path d="M1 11h2v3H1zM5 8h2v6H5zM9 5h2v9H9zM13 1h2v13h-2z" /></svg>
          <svg width="16" height="20" viewBox="0 0 16 20" fill="#fff"><path d="M1 1h1v18H1zM3 2h6l2 2h4l-3 4 3 3H9L7 9H3z" /></svg>
          <TrayText $ml={3}><span>ENG</span><span>INTL</span></TrayText>
          <TrayText $ml={8}><span>14:15</span><span>29/03/2021</span></TrayText>
        </Tray>
      </Taskbar>
    </Page>
  );
}
